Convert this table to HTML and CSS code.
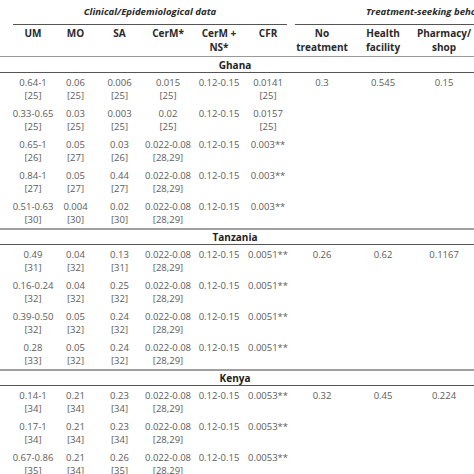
FILE: index.html
```html
<!DOCTYPE html>
<html>
<head>
<meta charset="utf-8">
<link rel="stylesheet" href="styles.css">
</head>
<body>
<table class="tbl">
  <colgroup>
    <col class="c1"><col class="c2"><col class="c3"><col class="c4"><col class="c5">
    <col class="c6"><col class="c7"><col class="c8"><col class="c9">
  </colgroup>
  <thead>
    <tr class="grp">
      <th colspan="6"><div class="grp-a">Clinical/Epidemiological data</div></th>
      <th colspan="3"><div class="grp-b">Treatment-seeking behaviour</div></th>
    </tr>
    <tr class="hdr">
      <th class="first">UM</th>
      <th>MO</th>
      <th>SA</th>
      <th>CerM*</th>
      <th>CerM +<br>NS*</th>
      <th>CFR</th>
      <th>No<br>treatment</th>
      <th>Health<br>facility</th>
      <th>Pharmacy/<br>shop</th>
    </tr>
  </thead>
  <tbody>
    <tr class="lbl"><td colspan="9">Ghana</td></tr>
    <tr class="row">
      <td class="first">0.64-1<br>[25]</td><td>0.06<br>[25]</td><td>0.006<br>[25]</td><td>0.015<br>[25]</td><td>0.12-0.15</td><td>0.0141<br>[25]</td><td>0.3</td><td>0.545</td><td>0.15</td>
    </tr>
    <tr class="row">
      <td class="first">0.33-0.65<br>[25]</td><td>0.03<br>[25]</td><td>0.003<br>[25]</td><td>0.02<br>[25]</td><td>0.12-0.15</td><td>0.0157<br>[25]</td><td></td><td></td><td></td>
    </tr>
    <tr class="row">
      <td class="first">0.65-1<br>[26]</td><td>0.05<br>[27]</td><td>0.03<br>[26]</td><td>0.022-0.08<br>[28,29]</td><td>0.12-0.15</td><td>0.003**</td><td></td><td></td><td></td>
    </tr>
    <tr class="row">
      <td class="first">0.84-1<br>[27]</td><td>0.05<br>[27]</td><td>0.44<br>[27]</td><td>0.022-0.08<br>[28,29]</td><td>0.12-0.15</td><td>0.003**</td><td></td><td></td><td></td>
    </tr>
    <tr class="row">
      <td class="first">0.51-0.63<br>[30]</td><td>0.004<br>[30]</td><td>0.02<br>[30]</td><td>0.022-0.08<br>[28,29]</td><td>0.12-0.15</td><td>0.003**</td><td></td><td></td><td></td>
    </tr>
    <tr class="lbl sep"><td colspan="9">Tanzania</td></tr>
    <tr class="row">
      <td class="first">0.49<br>[31]</td><td>0.04<br>[32]</td><td>0.13<br>[31]</td><td>0.022-0.08<br>[28,29]</td><td>0.12-0.15</td><td>0.0051**</td><td>0.26</td><td>0.62</td><td>0.1167</td>
    </tr>
    <tr class="row">
      <td class="first">0.16-0.24<br>[32]</td><td>0.04<br>[32]</td><td>0.25<br>[32]</td><td>0.022-0.08<br>[28,29]</td><td>0.12-0.15</td><td>0.0051**</td><td></td><td></td><td></td>
    </tr>
    <tr class="row">
      <td class="first">0.39-0.50<br>[32]</td><td>0.05<br>[32]</td><td>0.24<br>[32]</td><td>0.022-0.08<br>[28,29]</td><td>0.12-0.15</td><td>0.0051**</td><td></td><td></td><td></td>
    </tr>
    <tr class="row">
      <td class="first">0.28<br>[33]</td><td>0.05<br>[32]</td><td>0.24<br>[32]</td><td>0.022-0.08<br>[28,29]</td><td>0.12-0.15</td><td>0.0051**</td><td></td><td></td><td></td>
    </tr>
    <tr class="lbl sep"><td colspan="9">Kenya</td></tr>
    <tr class="row">
      <td class="first">0.14-1<br>[34]</td><td>0.21<br>[34]</td><td>0.23<br>[34]</td><td>0.022-0.08<br>[28,29]</td><td>0.12-0.15</td><td>0.0053**</td><td>0.32</td><td>0.45</td><td>0.224</td>
    </tr>
    <tr class="row">
      <td class="first">0.17-1<br>[34]</td><td>0.21<br>[34]</td><td>0.23<br>[34]</td><td>0.022-0.08<br>[28,29]</td><td>0.12-0.15</td><td>0.0053**</td><td></td><td></td><td></td>
    </tr>
    <tr class="row">
      <td class="first">0.67-0.86<br>[35]</td><td>0.21<br>[34]</td><td>0.26<br>[35]</td><td>0.022-0.08<br>[28,29]</td><td>0.12-0.15</td><td>0.0053**</td><td></td><td></td><td></td>
    </tr>
  </tbody>
</table>
</body>
</html>
```
FILE: styles.css
```css
html, body {
  margin: 0;
  padding: 0;
  background: #ffffff;
  overflow: hidden;
  width: 474px;
  height: 474px;
}

.tbl {
  font-family: "Open Sans", "Noto Sans", sans-serif;
  font-size: 9.5px;
  color: #5c5c5c;
  border-collapse: collapse;
  table-layout: fixed;
  width: 474px;
}

.c1 { width: 54px; }
.c2 { width: 43px; }
.c3 { width: 45px; }
.c4 { width: 52px; }
.c5 { width: 50px; }
.c6 { width: 48px; }
.c7 { width: 60px; }
.c8 { width: 62px; }
.c9 { width: 60px; }

.tbl th, .tbl td {
  padding: 0;
  text-align: center;
  vertical-align: top;
  white-space: nowrap;
}

.grp th {
  text-align: left;
  font-style: italic;
  font-weight: 700;
  font-size: 9.6px;
  color: #2a2a2a;
}

.grp-a, .grp-b {
  padding: 5px 0 5px;
  line-height: 14px;
  border-bottom: 1px solid #555;
}

.grp-a {
  margin-left: 13px;
  margin-right: 5px;
  text-align: center;
}

.grp-b {
  margin-left: 3px;
  padding-left: 71px;
  overflow: hidden;
}

.hdr th {
  font-size: 10px;
  font-weight: 700;
  color: #2a2a2a;
  line-height: 14px;
  padding: 1px 0 2px;
  border-bottom: 1px solid #9a9a9a;
}

.first {
  padding-left: 12px !important;
}

.lbl td {
  font-size: 10px;
  font-weight: 700;
  color: #222;
  line-height: 14px;
  padding: 1px 4px 0 0;
  border-bottom: 1px solid #555;
}

.lbl.sep td {
  border-top: 2px solid #a0a0a0;
  padding-top: 0;
}

.row td {
  line-height: 13px;
  padding: 3px 0 2px;
}
```
